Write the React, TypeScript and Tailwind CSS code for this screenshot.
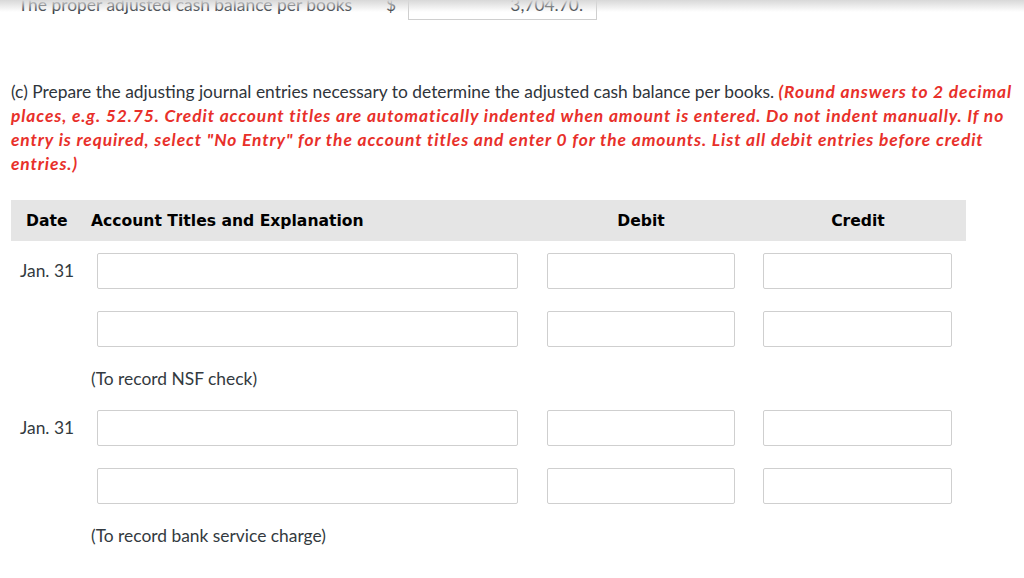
import React from 'react';

const lato = { fontFamily: 'Lato, "Open Sans", sans-serif' };

type Entry = { date: string; note: string };

const entries: Entry[] = [
    { date: 'Jan. 31', note: '(To record NSF check)' },
    { date: 'Jan. 31', note: '(To record bank service charge)' },
];

const Box: React.FC<{ className?: string }> = ({ className }) => (
    <input
        type="text"
        className={`h-[36px] rounded-[2px] border border-[#cfcfcf] bg-white px-2 outline-none ${className ?? ''}`}
    />
);

const Line: React.FC<{ date?: string }> = ({ date }) => (
    <div className="flex items-center">
        <div className="w-[86px] pl-[9px] text-[17.4px] text-[#333a40]">{date}</div>
        <Box className="w-[421px]" />
        <Box className="ml-[29px] w-[188px]" />
        <Box className="ml-[28px] w-[189px]" />
    </div>
);

export default function App() {
    return (
        <div className="relative h-[578px] overflow-hidden bg-white" style={lato}>
            <div className="pointer-events-none absolute inset-x-0 top-0 h-[12px] bg-gradient-to-b from-[#d8d8d8] to-transparent" />

            <div className="flex -mt-[15px] h-[35px] items-center text-[17.4px] text-[#3a4046]">
                <span className="pl-[18px] pt-[5px] w-[386px]">The proper adjusted cash balance per books</span>
                <span className="pt-[5px] w-[22px]">$</span>
                <div className="flex h-[35px] w-[189px] items-center justify-end border border-[#cfcfcf] pr-[13px] pt-[5px]">3,704.70.</div>
            </div>

            <p className="mt-[60px] px-[11px] text-[17.4px] leading-[24px] text-[#2f353b]">
                (c) Prepare the adjusting journal entries necessary to determine the adjusted cash balance per books.{' '}
                <span className="font-bold italic tracking-[0.9px] text-[#e8302a]">
                    (Round answers to 2 decimal places, e.g. 52.75. Credit account titles are automatically indented when
                    amount is entered. Do not indent manually. If no entry is required, select "No Entry" for the account
                    titles and enter 0 for the amounts. List all debit entries before credit entries.)
                </span>
            </p>

            <div className="mt-[24px] ml-[11px] w-[955px]">
                <div
                    className="flex h-[41px] items-center bg-[#e5e5e5] pt-[3px] text-[15.6px] font-bold text-black"
                    style={{ fontFamily: '"DejaVu Sans", Verdana, sans-serif' }}
                >
                    <div className="w-[80px] pl-[15px]">Date</div>
                    <div className="w-[456px]">Account Titles and Explanation</div>
                    <div className="w-[188px] text-center">Debit</div>
                    <div className="ml-[29px] w-[188px] text-center">Credit</div>
                </div>

                {entries.map((e, i) => (
                    <div key={i} className={i === 0 ? 'mt-[12px]' : 'mt-[21px]'}>
                        <Line date={e.date} />
                        <div className="mt-[22px]">
                            <Line />
                        </div>
                        <div className="mt-[22px] pl-[80px] text-[17.4px] leading-[20px] text-[#333a40]">{e.note}</div>
                    </div>
                ))}
            </div>
        </div>
    );
}
